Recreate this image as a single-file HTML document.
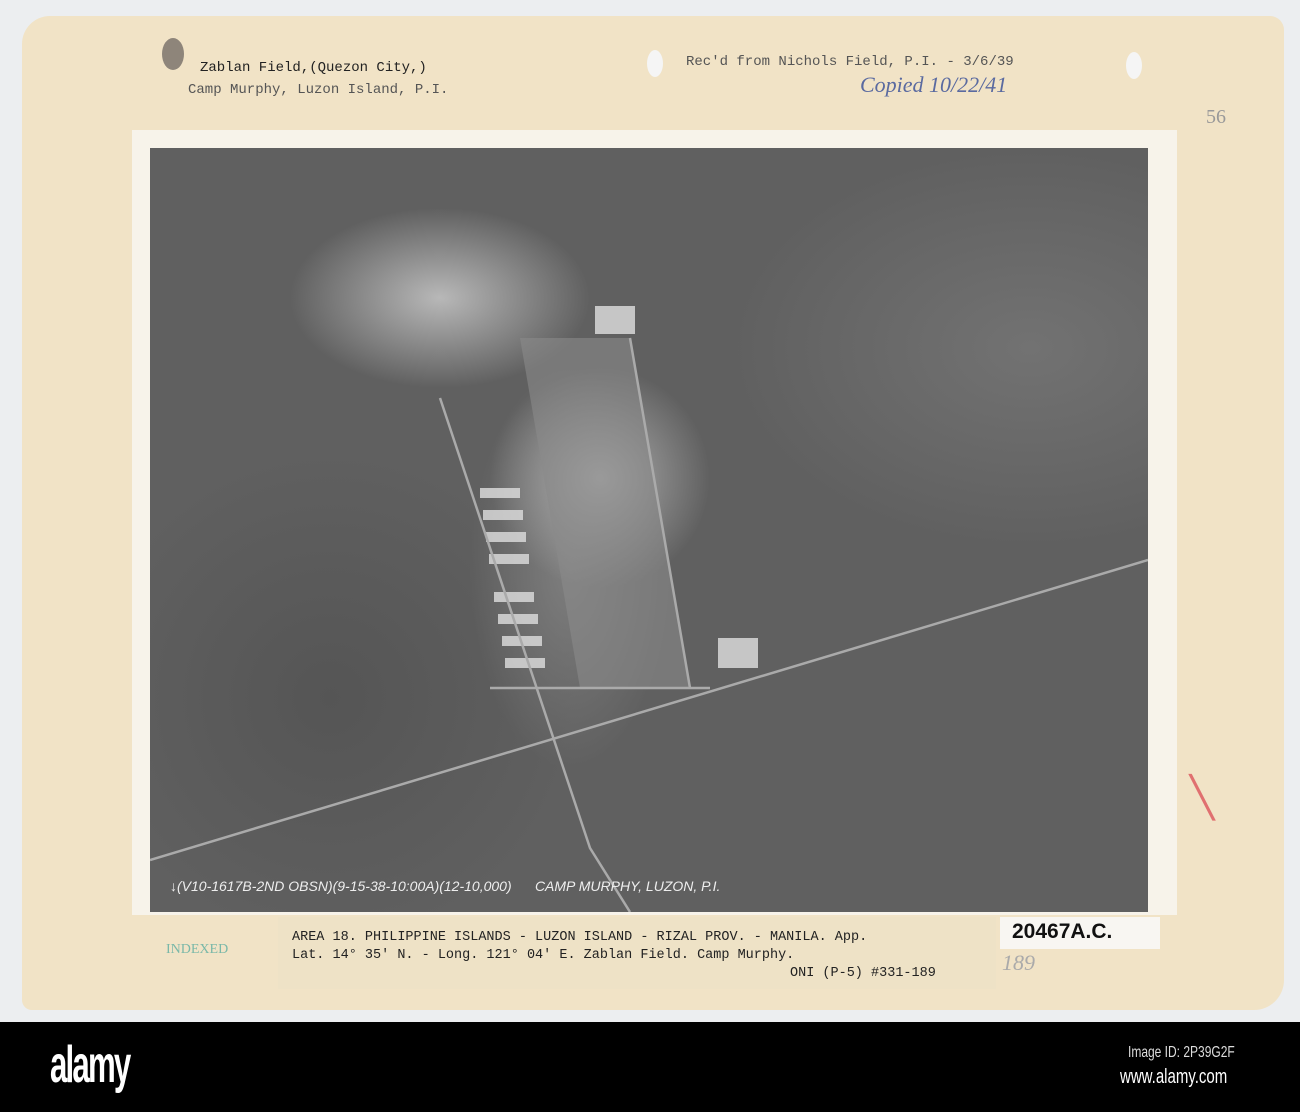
<!DOCTYPE html>
<html><head><style>
body{margin:0;width:1300px;height:1112px;background:#eceef0;position:relative;overflow:hidden;font-family:"Liberation Mono",monospace}
.card{position:absolute;left:22px;top:16px;width:1262px;height:994px;background:#f1e3c6;border-radius:28px 14px 30px 10px}
.hole{position:absolute;border-radius:50%}
.t{position:absolute;white-space:nowrap;color:#333}
.mount{position:absolute;left:132px;top:130px;width:1045px;height:785px;background:#f7f3ea}
.photo{position:absolute;left:150px;top:148px;width:998px;height:764px;background:
radial-gradient(ellipse 110px 110px at 450px 330px,#b0b0b0,transparent),
radial-gradient(ellipse 150px 90px at 290px 150px,#b8b8b8,transparent),
radial-gradient(ellipse 100px 200px at 420px 420px,#7e7e7e,transparent),
radial-gradient(ellipse 300px 200px at 880px 200px,#727272,transparent),
radial-gradient(ellipse 250px 250px at 180px 550px,#555,transparent),
#606060}
.lab{position:absolute;left:278px;top:917px;width:718px;height:72px;background:#eee2c6}
.num{position:absolute;left:1000px;top:917px;width:160px;height:32px;background:#f8f6f2}
.bar{position:absolute;left:0;top:1022px;width:1300px;height:90px;background:#000}
</style></head><body>
<div class="card"></div>
<div class="hole" style="left:162px;top:38px;width:22px;height:32px;background:#8e857a"></div>
<div class="hole" style="left:647px;top:50px;width:16px;height:27px;background:#f5f5f5"></div>
<div class="hole" style="left:1126px;top:52px;width:16px;height:27px;background:#f5f5f5"></div>
<div class="t" style="left:200px;top:60px;font-size:14px;color:#222">Zablan Field,(Quezon City,)</div>
<div class="t" style="left:188px;top:82px;font-size:14px;color:#555">Camp Murphy, Luzon Island, P.I.</div>
<div class="t" style="left:686px;top:54px;font-size:14px;color:#555">Rec'd from Nichols Field, P.I. - 3/6/39</div>
<div class="t" style="left:860px;top:72px;font-size:22px;color:#5a6aa0;font-style:italic;font-family:'Liberation Serif',serif">Copied 10/22/41</div>
<div class="t" style="left:1206px;top:106px;font-size:20px;color:#999;font-family:'Liberation Serif',serif">56</div>
<div class="mount"></div>
<div class="photo">
<svg width="998" height="764" style="position:absolute;left:0;top:0">
<path d="M370 190 L480 190 L540 540 L430 540 Z" fill="#8a8a8a" opacity=".6"/>
<g fill="#d8d8d8" opacity=".85">
<rect x="330" y="340" width="40" height="10"/><rect x="333" y="362" width="40" height="10"/><rect x="336" y="384" width="40" height="10"/><rect x="339" y="406" width="40" height="10"/><rect x="344" y="444" width="40" height="10"/><rect x="348" y="466" width="40" height="10"/><rect x="352" y="488" width="40" height="10"/><rect x="355" y="510" width="40" height="10"/><rect x="568" y="490" width="40" height="30"/><rect x="445" y="158" width="40" height="28"/></g>
<path d="M290 250 L440 700 L480 764 M480 190 L540 540 M0 712 L998 412 M340 540 L560 540" stroke="#aaa" stroke-width="2.5" fill="none"/>
</svg>
<div class="t" style="left:20px;top:730px;font-size:14px;color:#eee;font-style:italic;font-family:'Liberation Sans',sans-serif">↓(V10-1617B-2ND OBSN)(9-15-38-10:00A)(12-10,000)&nbsp;&nbsp;&nbsp;&nbsp;&nbsp;&nbsp;CAMP MURPHY, LUZON, P.I.</div>
</div>
<div class="lab"></div>
<div class="num"></div>
<div class="t" style="left:1012px;top:920px;font-size:21px;font-weight:bold;color:#111;font-family:'Liberation Sans',sans-serif">20467A.C.</div>
<div class="t" style="left:292px;top:930px;font-size:13.5px;color:#222">AREA 18.  PHILIPPINE ISLANDS - LUZON ISLAND - RIZAL PROV. - MANILA.  App.</div>
<div class="t" style="left:292px;top:948px;font-size:13.5px;color:#222">Lat. 14° 35' N. - Long. 121° 04' E.  Zablan Field.  Camp Murphy.</div>
<div class="t" style="left:790px;top:966px;font-size:13.5px;color:#222">ONI (P-5) #331-189</div>
<div class="t" style="left:166px;top:942px;font-size:14px;color:#7ab8a8;font-family:'Liberation Serif',serif">INDEXED</div>
<div class="t" style="left:1002px;top:950px;font-size:22px;color:#aaa;font-family:'Liberation Serif',serif;font-style:italic">189</div>
<div class="t" style="left:1190px;top:775px;font-size:40px;color:#e07070;font-family:'Liberation Sans',sans-serif">╲</div>
<div class="bar"></div>
<div class="t" style="left:50px;top:1035px;font-size:52px;color:#fff;font-family:'Liberation Sans',sans-serif;font-weight:bold;letter-spacing:-3px;transform:scaleX(.6);transform-origin:left">alamy</div>
<div class="t" style="left:1128px;top:1044px;font-size:16px;color:#ddd;font-family:'Liberation Sans',sans-serif;transform:scaleX(.75);transform-origin:left">Image ID: 2P39G2F</div>
<div class="t" style="left:1120px;top:1066px;font-size:20px;color:#fff;font-family:'Liberation Sans',sans-serif;transform:scaleX(.75);transform-origin:left">www.alamy.com</div>
</body></html>
